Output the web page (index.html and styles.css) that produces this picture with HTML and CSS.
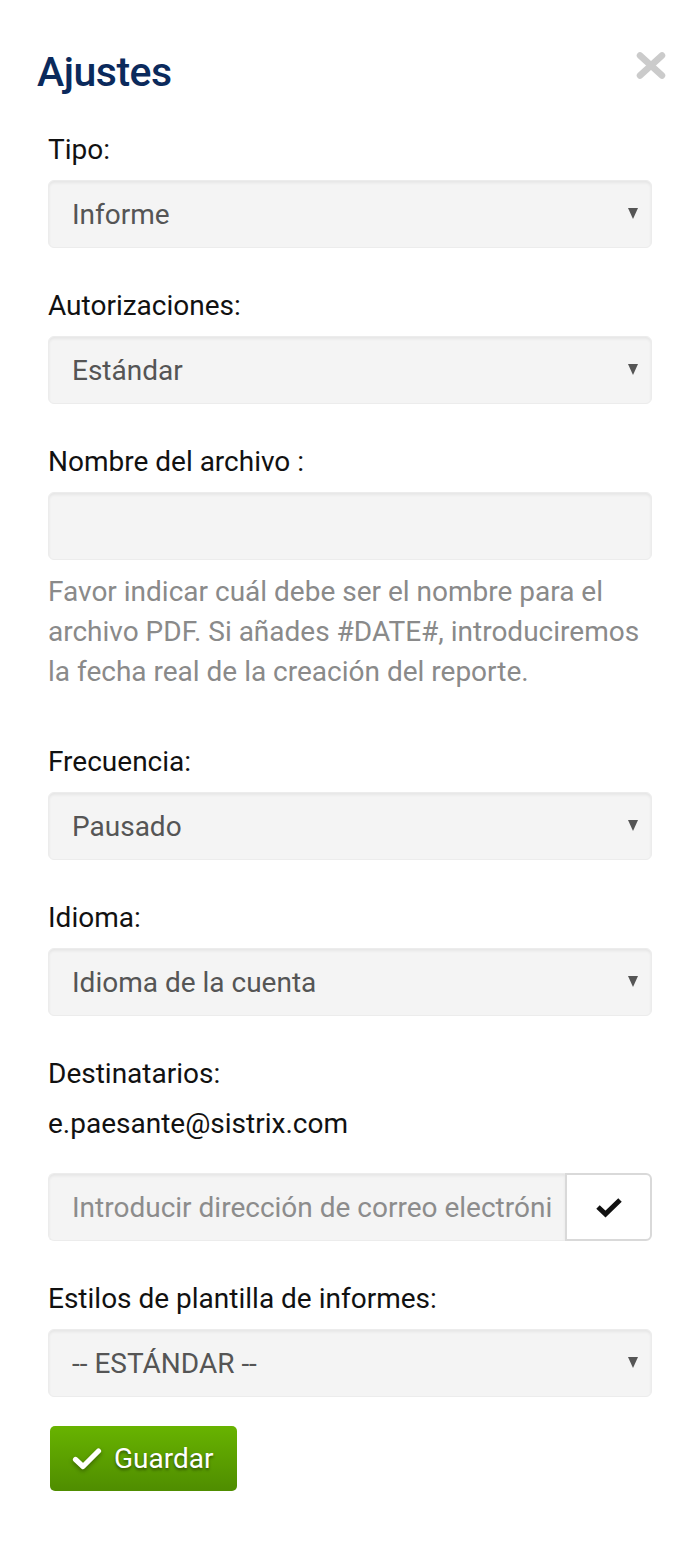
FILE: index.html
```html
<!DOCTYPE html>
<html lang="es">
<head>
<meta charset="utf-8">
<title>Ajustes</title>
<link rel="stylesheet" href="styles.css">
</head>
<body>
<div class="modal">
  <div class="modal-header">
    <h1 class="modal-title">Ajustes</h1>
    <button type="button" class="close" aria-label="Cerrar">
      <svg viewBox="0 0 30 27" width="30" height="27"><path d="M4 3.5 L26 23.5 M26 3.5 L4 23.5" stroke="#cbcbcb" stroke-width="6.5" stroke-linecap="round" fill="none"/></svg>
    </button>
  </div>
  <form class="modal-body">
    <div class="form-group">
      <label class="control-label">Tipo:</label>
      <div class="select-wrap">
        <select class="form-control"><option>Informe</option></select>
      </div>
    </div>
    <div class="form-group">
      <label class="control-label">Autorizaciones:</label>
      <div class="select-wrap">
        <select class="form-control"><option>Estándar</option></select>
      </div>
    </div>
    <div class="form-group form-group--help">
      <label class="control-label">Nombre del archivo :</label>
      <input type="text" class="form-control">
      <p class="help-block">Favor indicar cuál debe ser el nombre para el archivo PDF. Si añades #DATE#, introduciremos la fecha real de la creación del reporte.</p>
    </div>
    <div class="form-group">
      <label class="control-label">Frecuencia:</label>
      <div class="select-wrap">
        <select class="form-control"><option>Pausado</option></select>
      </div>
    </div>
    <div class="form-group">
      <label class="control-label">Idioma:</label>
      <div class="select-wrap">
        <select class="form-control"><option>Idioma de la cuenta</option></select>
      </div>
    </div>
    <div class="form-group">
      <label class="control-label">Destinatarios:</label>
      <div class="recipient">e.paesante@sistrix.com</div>
      <div class="input-group">
        <input type="text" class="form-control" placeholder="Introducir dirección de correo electrónico">
        <button type="button" class="btn-add" aria-label="Añadir">
          <svg viewBox="0 0 28 22" width="28" height="22"><path d="M3 11 L10.5 18 L25 4" stroke="#111" stroke-width="5" fill="none" stroke-linejoin="miter"/></svg>
        </button>
      </div>
    </div>
    <div class="form-group">
      <label class="control-label">Estilos de plantilla de informes:</label>
      <div class="select-wrap">
        <select class="form-control"><option>-- ESTÁNDAR --</option></select>
      </div>
    </div>
    <button type="button" class="btn-save">
      <svg viewBox="0 0 30 24" width="30" height="24"><path d="M3.5 12.5 L11 19.5 L26.5 4" stroke="#fff" stroke-width="5.2" fill="none" stroke-linecap="round" stroke-linejoin="round"/></svg>
      <span>Guardar</span>
    </button>
  </form>
</div>
</body>
</html>
```

FILE: styles.css
```css
* {
  box-sizing: border-box;
}

html, body {
  margin: 0;
  background: #fff;
}

body {
  font-family: Roboto, "Liberation Sans", Arial, sans-serif;
  font-size: 28px;
  line-height: 40px;
  color: #111;
}

.modal {
  width: 700px;
}

.modal-header {
  display: flex;
  justify-content: space-between;
  align-items: flex-start;
  padding: 50px 34px 0 37px;
}

.modal-title {
  margin: 0;
  font-size: 41px;
  font-weight: 500;
  line-height: 45px;
  color: #0b2a5c;
  letter-spacing: -0.5px;
}

.close {
  border: 0;
  background: none;
  padding: 0;
  margin-top: 2px;
  cursor: pointer;
}

.close svg {
  display: block;
}

.modal-body {
  padding: 35px 48px 40px;
  margin: 0;
}

.form-group {
  margin-bottom: 38px;
}

.form-group--help {
  margin-bottom: 50px;
}

.control-label {
  display: block;
  margin-bottom: 10px;
  font-weight: 400;
  color: #111;
}

.form-control {
  display: block;
  width: 100%;
  height: 68px;
  margin: 0;
  padding: 0 24px 0 23px;
  font-family: inherit;
  font-size: 28px;
  color: #555;
  background: #f4f4f4;
  border: 1px solid #ececec;
  border-radius: 6px;
  box-shadow: inset 0 2px 3px rgba(0, 0, 0, 0.06);
  outline: none;
  appearance: none;
  -webkit-appearance: none;
}

.form-control::placeholder {
  color: #8c8c8c;
}

.select-wrap {
  position: relative;
}

.select-wrap::after {
  content: "";
  position: absolute;
  right: 14px;
  top: 28px;
  border-left: 5.5px solid transparent;
  border-right: 5.5px solid transparent;
  border-top: 11px solid #555;
  pointer-events: none;
}

.help-block {
  margin: 12px 0 0;
  color: #8a8a8a;
}

.recipient {
  margin: 2px 0 29px;
}

.input-group {
  display: flex;
}

.input-group .form-control {
  flex: 1;
  min-width: 0;
  padding-right: 14px;
  border-radius: 6px 0 0 6px;
  border-right: 0;
}

.btn-add {
  flex: 0 0 87px;
  height: 68px;
  background: #fff;
  border: 2px solid #d9d9d9;
  border-radius: 0 6px 6px 0;
  display: flex;
  align-items: center;
  justify-content: center;
  padding: 0;
  cursor: pointer;
}

.btn-add svg {
  display: block;
}

.btn-save {
  display: flex;
  align-items: center;
  gap: 12px;
  margin: -9px 0 0 2px;
  height: 65px;
  padding: 0 24px 0 22px;
  border: 0;
  border-radius: 5px;
  background: linear-gradient(#68b300, #4f8d00);
  color: #fff;
  font-family: inherit;
  font-size: 28px;
  font-weight: 400;
  text-shadow: 0 2px 3px rgba(0, 0, 0, 0.45);
  cursor: pointer;
}

.btn-save svg {
  display: block;
  filter: drop-shadow(0 2px 2px rgba(0, 0, 0, 0.35));
}
```
